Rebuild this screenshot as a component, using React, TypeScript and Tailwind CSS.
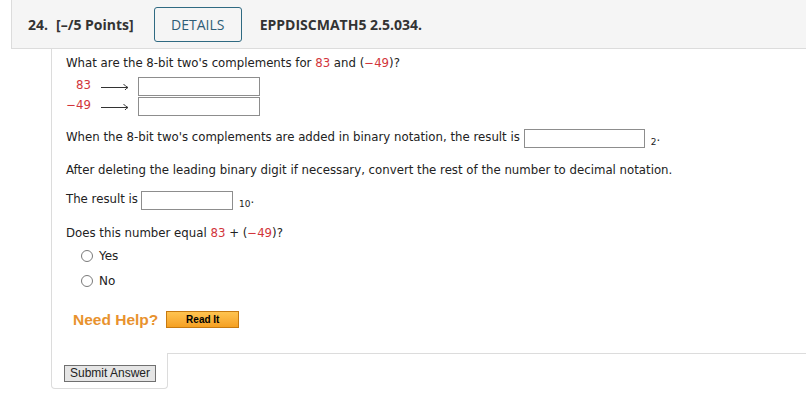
import React from "react";

const red = "text-[#d2353b]";

function Arrow() {
  return (
    <svg width="28" height="9" viewBox="0 0 28 9" className="inline-block">
      <line x1="0" y1="5.5" x2="26.5" y2="5.5" stroke="#333" strokeWidth="1" />
      <path d="M22.5 2 Q24.5 4.5 27 5.5 Q25 6.5 24 8" stroke="#333" strokeWidth="1" fill="none" />
    </svg>
  );
}

function Input({ w }: { w: string }) {
  return <span className={`inline-block h-[19px] border border-[#8d8d8d] bg-white align-middle ${w}`} />;
}

function Radio({ label }: { label: string }) {
  return (
    <div className="flex items-center h-[25px] pl-[15px]">
      <span className="w-[12px] h-[12px] rounded-full border border-[#7a7a7a] bg-white" />
      <span className="ml-[6px] text-[12px]">{label}</span>
    </div>
  );
}

export default function App() {
  return (
    <div className="w-[806px] h-[394px] bg-white overflow-hidden text-[#222]" style={{ fontFamily: "'DejaVu Sans', Verdana, sans-serif" }}>
      <div className="ml-[11px] h-[49px] bg-[#f5f5f5] border-l border-b border-[#dcdcdc] flex items-center text-[14px] text-[#333]" style={{ fontFamily: "'Open Sans', sans-serif" }}>
        <span className="ml-[16px] font-bold">24.</span>
        <span className="ml-[8px] font-bold">[–/5 Points]</span>
        <span className="ml-[20px] h-[35px] w-[88px] border border-[#2f6a82] rounded-[3px] flex items-center justify-center text-[#2d5d77] bg-[#f5f5f5]">DETAILS</span>
        <span className="ml-[18px] font-bold">EPPDISCMATH5 2.5.034.</span>
      </div>
      <div className="ml-[51px] border-l border-[#dcdcdc] pl-[14px] pt-[7px] text-[11.75px] h-[304px]">
        <div className="h-[15px] leading-[15px]">
          What are the 8-bit two's complements for <span className={red}>83</span> and (<span className={red}>−49</span>)?
        </div>
        <div className="mt-[5px] flex items-center h-[20px]">
          <span className={`w-[25px] text-right ${red}`}>83</span>
          <span className="ml-[10px] flex"><Arrow /></span>
          <span className="ml-[9px] flex"><Input w="w-[122px]" /></span>
        </div>
        <div className="flex items-center h-[20px]">
          <span className={`w-[25px] text-right ${red}`}>−49</span>
          <span className="ml-[10px] flex"><Arrow /></span>
          <span className="ml-[9px] flex"><Input w="w-[122px]" /></span>
        </div>
        <div className="mt-[12px] flex items-center h-[20px]">
          <span>When the 8-bit two's complements are added in binary notation, the result is</span>
          <span className="ml-[4px] flex"><Input w="w-[121px]" /></span>
          <span className="ml-[6px] relative top-[4px]"><span className="text-[9px]">2</span><span className="relative -top-[4px]">.</span></span>
        </div>
        <div className="mt-[15px] h-[15px] leading-[15px]">After deleting the leading binary digit if necessary, convert the rest of the number to decimal notation.</div>
        <div className="mt-[12px] flex items-center h-[20px]">
          <span>The result is</span>
          <span className="ml-[3px] flex"><Input w="w-[92px]" /></span>
          <span className="ml-[6px] relative top-[4px]"><span className="text-[9px]">10</span><span className="relative -top-[4px]">.</span></span>
        </div>
        <div className="mt-[16px] h-[15px] leading-[15px]">
          Does this number equal <span className={red}>83</span> + (<span className={red}>−49</span>)?
        </div>
        <div className="mt-[2px]">
          <Radio label="Yes" />
          <Radio label="No" />
        </div>
        <div className="mt-[15px] flex items-center pl-[7px]">
          <span className="text-[15.5px] font-bold text-[#e8922e]" style={{ fontFamily: "'Liberation Sans', Arial, sans-serif" }}>Need Help?</span>
          <span className="ml-[8px] h-[17px] w-[73px] border border-[#c77a10] bg-gradient-to-b from-[#ffc450] to-[#f5a020] flex items-center justify-center text-[10px] font-bold text-black" style={{ fontFamily: "'Liberation Sans', Arial, sans-serif" }}>Read It</span>
        </div>
      </div>
      <div className="flex">
        <div className="ml-[51px] w-[117px] h-[36px] border-l border-r border-b border-[#dcdcdc] rounded-b-[4px] pt-[7px] pl-[12px]">
          <span className="inline-flex h-[17px] w-[92px] items-center justify-center border border-[#707070] bg-[#e5e5e5] text-[12px] text-[#222]" style={{ fontFamily: "'Liberation Sans', Arial, sans-serif" }}>Submit Answer</span>
        </div>
        <div className="flex-1 border-t border-[#dcdcdc]" />
      </div>
    </div>
  );
}
